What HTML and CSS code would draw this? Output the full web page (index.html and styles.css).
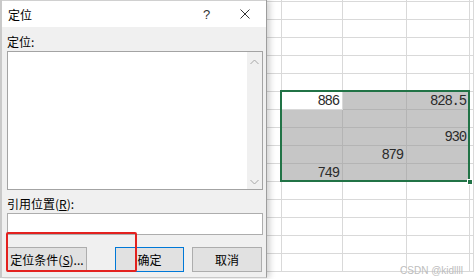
FILE: index.html
```html
<!DOCTYPE html>
<html lang="zh">
<head>
    <meta charset="UTF-8">
    <title>定位</title>
    <link rel="stylesheet" href="styles.css">
</head>
<body>
    <div class="screen">
        <div class="dialog">
            <div class="titlebar">
                <span class="title">定位</span>
                <span class="help">?</span>
                <span class="close">
                    <svg width="10" height="10" viewBox="0 0 10 10"><path d="M0.5 0.5L9.5 9.5M9.5 0.5L0.5 9.5" stroke="#333" stroke-width="1"/></svg>
                </span>
            </div>
            <div class="content">
                <div class="label first">定位:</div>
                <div class="listbox">
                    <div class="list-items"></div>
                    <div class="scrollbar">
                        <svg width="9" height="6" viewBox="0 0 9 6"><polyline points="0.5,5 4.5,1 8.5,5" fill="none" stroke="#a6a6a6" stroke-width="1"/></svg>
                        <svg width="9" height="6" viewBox="0 0 9 6"><polyline points="0.5,1 4.5,5 8.5,1" fill="none" stroke="#a6a6a6" stroke-width="1"/></svg>
                    </div>
                </div>
                <div class="label">引用位置(<u>R</u>):</div>
                <div class="textbox"></div>
                <div class="buttons">
                    <div class="btn btn-special">定位条件(<u>S</u>)...</div>
                    <div class="btn btn-ok">确定</div>
                    <div class="btn btn-cancel">取消</div>
                </div>
            </div>
            <div class="highlight"></div>
        </div>

        <div class="sheet" id="sheet">
            <div class="selection"><span class="handle"></span></div>
        </div>
        <div class="watermark">CSDN @kidllll</div>
    </div>

    <script>
        const sheet = document.getElementById('sheet');
        const selection = sheet.querySelector('.selection');
        // значения ячеек: [строка, колонка] -> текст
        const values = { '6-1': '886', '6-3': '828.5', '8-3': '930', '9-2': '879', '10-1': '749' };

        for (let r = 0; r < 16; r++) {
            for (let c = 0; c < 5; c++) {
                const cell = document.createElement('div');
                cell.className = 'cell';
                if (r >= 6 && r <= 10 && c >= 1 && c <= 3) {
                    cell.classList.add(r === 6 && c === 1 ? 'active' : 'selected');
                }
                cell.style.gridRow = r + 1;
                cell.style.gridColumn = c + 1;
                cell.textContent = values[r + '-' + c] || '';
                sheet.insertBefore(cell, selection);
            }
        }
    </script>
</body>
</html>
```

FILE: styles.css
```css
* { box-sizing: border-box; }
body { margin: 0; background: #fff; }
.screen {
    position: relative;
    display: flex;
    width: 474px;
    height: 279px;
    overflow: hidden;
    font-family: "Noto Sans CJK SC", "Noto Sans", sans-serif;
    font-size: 12px;
    color: #000;
}

/* Диалог */
.dialog {
    position: relative;
    z-index: 1;
    width: 267px;
    height: 278px;
    flex-shrink: 0;
    background: #f0f0f0;
    border-left: 2px solid #c9c9c9;
    border-right: 1px solid #9d9d9d;
    border-bottom: 1px solid #c9c9c9;
    box-shadow: 3px 0 6px rgba(0,0,0,0.18);
}
.titlebar {
    display: flex;
    align-items: center;
    height: 27px;
    padding-left: 6px;
    background: #fff;
    border-top: 1px solid #d0d0d0;
}
.title { flex: 1; }
.help { width: 14px; margin-right: 23px; font-family: "Liberation Sans", sans-serif; font-size: 13px; color: #333; }
.close { display: flex; width: 26px; }
.content { padding: 0 3px 0 5px; }
.label { height: 18px; line-height: 18px; margin-top: 5px; }
.label.first { margin-top: 6px; }
.listbox {
    display: flex;
    width: 256px;
    height: 139px;
    background: #fff;
    border: 1px solid #a3a3a3;
}
.list-items { flex: 1; }
.scrollbar {
    display: flex;
    flex-direction: column;
    justify-content: space-between;
    align-items: center;
    width: 15px;
    padding: 7px 0 4px;
    background: #f0f0f0;
}
.textbox {
    width: 256px;
    height: 22px;
    background: #fff;
    border: 1px solid #adadad;
}
.buttons { display: flex; margin-top: 12px; }
.btn {
    height: 25px;
    line-height: 23px;
    text-align: center;
    background: #e1e1e1;
    border: 1px solid #adadad;
}
.btn-special { width: 80px; }
.btn-ok { width: 69px; margin-left: 28px; border-color: #0078d7; }
.btn-cancel { width: 70px; margin-left: 8px; }
.highlight {
    position: absolute;
    left: 4px;
    top: 232px;
    width: 131px;
    height: 40px;
    border: 2.5px solid #e3211f;
    border-radius: 2px;
}

/* Лист */
.sheet {
    position: relative;
    display: grid;
    grid-template-columns: 15px 61px 64px 63px 1fr;
    grid-template-rows: 2px repeat(15, 18px);
    flex: 1;
    font-family: "Liberation Mono", monospace;
    font-size: 14px;
    letter-spacing: -1.2px;
    color: #2b2b2b;
}
.cell {
    border-right: 1px solid #d9d9d9;
    border-bottom: 1px solid #d9d9d9;
    text-align: right;
    padding-right: 3px;
    line-height: 19px;
    white-space: nowrap;
}
.cell.selected { background: #c6c6c6; border-color: #b4b4b4; }
.cell.active { background: #fff; }
.selection {
    position: relative;
    grid-row: 7 / 12;
    grid-column: 2 / 5;
    margin: -2px 0 0 -2px;
    border: 2px solid #217346;
}
.handle {
    position: absolute;
    right: -5px;
    bottom: -5px;
    width: 6px;
    height: 6px;
    background: #217346;
    border: 1px solid #fff;
}
.watermark {
    position: absolute;
    right: 11px;
    bottom: 3px;
    z-index: 2;
    font-family: "Liberation Sans", sans-serif;
    font-size: 10px;
    color: #bdbdbd;
}
```
